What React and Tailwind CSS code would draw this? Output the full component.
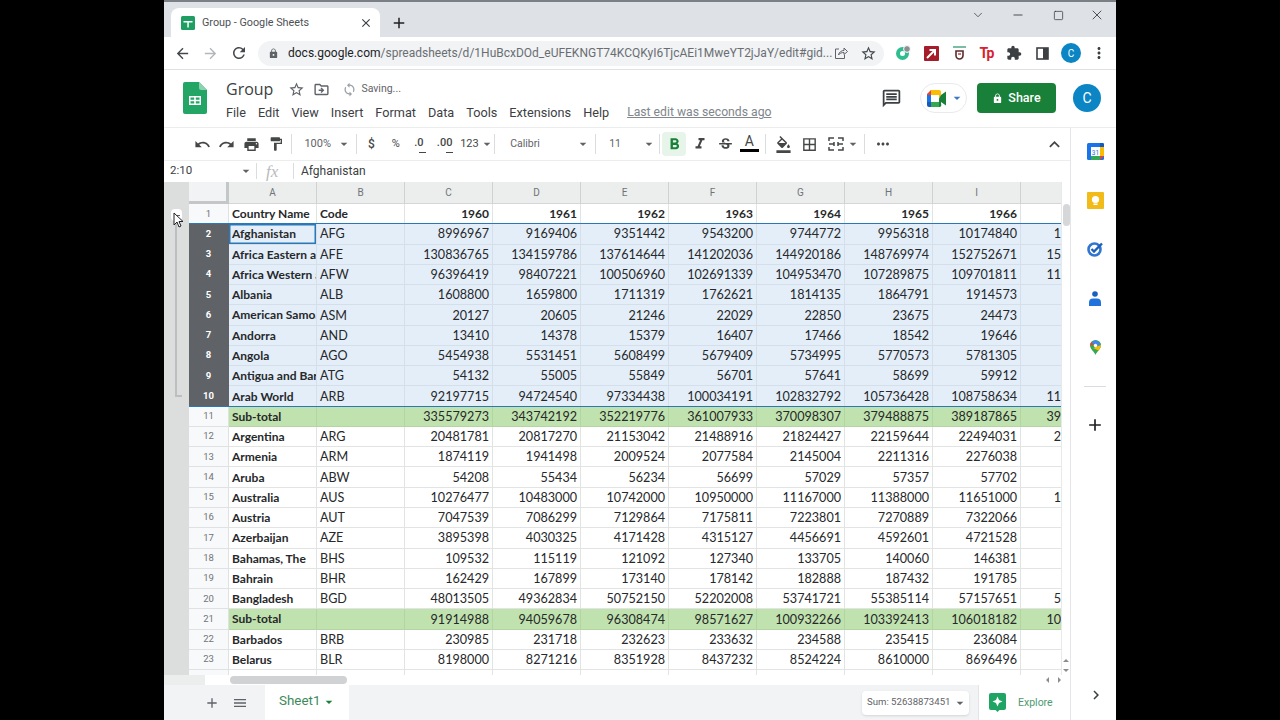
import {
    MdUndo, MdRedo, MdPrint, MdFormatPaint, MdFormatBold, MdFormatItalic, MdStrikethroughS, MdFormatColorFill,
    MdBorderAll, MdMoreHoriz, MdKeyboardArrowUp, MdArrowDropDown, MdStarBorder, MdOutlineDriveFileMove, MdSync,
    MdLock, MdAdd, MdMenu, MdExtension, MdArrowBack, MdArrowForward, MdRefresh, MdMoreVert, MdChevronRight, MdClose,
    MdOutlineInsertComment,
} from 'react-icons/md';
import { ChevronDown, Minus, Square, X } from 'lucide-react';

const rows = [
    ['Country Name', 'Code', '1960', '1961', '1962', '1963', '1964', '1965', '1966', ''],
    ['Afghanistan', 'AFG', '8996967', '9169406', '9351442', '9543200', '9744772', '9956318', '10174840', '1'],
    ['Africa Eastern and Southern', 'AFE', '130836765', '134159786', '137614644', '141202036', '144920186', '148769974', '152752671', '15'],
    ['Africa Western and Central', 'AFW', '96396419', '98407221', '100506960', '102691339', '104953470', '107289875', '109701811', '11'],
    ['Albania', 'ALB', '1608800', '1659800', '1711319', '1762621', '1814135', '1864791', '1914573', ''],
    ['American Samoa', 'ASM', '20127', '20605', '21246', '22029', '22850', '23675', '24473', ''],
    ['Andorra', 'AND', '13410', '14378', '15379', '16407', '17466', '18542', '19646', ''],
    ['Angola', 'AGO', '5454938', '5531451', '5608499', '5679409', '5734995', '5770573', '5781305', ''],
    ['Antigua and Barbuda', 'ATG', '54132', '55005', '55849', '56701', '57641', '58699', '59912', ''],
    ['Arab World', 'ARB', '92197715', '94724540', '97334438', '100034191', '102832792', '105736428', '108758634', '11'],
    ['Sub-total', '', '335579273', '343742192', '352219776', '361007933', '370098307', '379488875', '389187865', '39'],
    ['Argentina', 'ARG', '20481781', '20817270', '21153042', '21488916', '21824427', '22159644', '22494031', '2'],
    ['Armenia', 'ARM', '1874119', '1941498', '2009524', '2077584', '2145004', '2211316', '2276038', ''],
    ['Aruba', 'ABW', '54208', '55434', '56234', '56699', '57029', '57357', '57702', ''],
    ['Australia', 'AUS', '10276477', '10483000', '10742000', '10950000', '11167000', '11388000', '11651000', '1'],
    ['Austria', 'AUT', '7047539', '7086299', '7129864', '7175811', '7223801', '7270889', '7322066', ''],
    ['Azerbaijan', 'AZE', '3895398', '4030325', '4171428', '4315127', '4456691', '4592601', '4721528', ''],
    ['Bahamas, The', 'BHS', '109532', '115119', '121092', '127340', '133705', '140060', '146381', ''],
    ['Bahrain', 'BHR', '162429', '167899', '173140', '178142', '182888', '187432', '191785', ''],
    ['Bangladesh', 'BGD', '48013505', '49362834', '50752150', '52202008', '53741721', '55385114', '57157651', '5'],
    ['Sub-total', '', '91914988', '94059678', '96308474', '98571627', '100932266', '103392413', '106018182', '10'],
    ['Barbados', 'BRB', '230985', '231718', '232623', '233632', '234588', '235415', '236084', ''],
    ['Belarus', 'BLR', '8198000', '8271216', '8351928', '8437232', '8524224', '8610000', '8696496', ''],
    ['', '', '', '', '', '', '', '', '', ''],
];

const menus = ['File', 'Edit', 'View', 'Insert', 'Format', 'Data', 'Tools', 'Extensions', 'Help'];
const columns = ['A', 'B', 'C', 'D', 'E', 'F', 'G', 'H', 'I', ''];

const Sep = ({ className = '' }) => <div className={`w-px h-[20px] bg-[#dadce0] shrink-0 ${className}`} />;

const ToolBtn = ({ children, className = '' }) => (
    <div className={`w-[24.6px] h-[24px] shrink-0 flex items-center justify-center text-[#444746] ${className}`}>{children}</div>
);

const Caret = ({ className = '' }) => <MdArrowDropDown size={16} className={`text-[#5f6368] shrink-0 ${className}`} />;

const SheetsLogo = () => (
    <svg width="24" height="32" viewBox="0 0 24 32">
        <path d="M2 0h14l8 8v22a2 2 0 0 1-2 2H2a2 2 0 0 1-2-2V2a2 2 0 0 1 2-2z" fill="#23a566" />
        <path d="M16 0l8 8h-6a2 2 0 0 1-2-2z" fill="#8ed1b1" />
        <path d="M6 14h12v9H6z M7.5 15.5v2.2h3.7v-2.2z M12.8 15.5v2.2h3.7v-2.2z M7.5 19.3v2.2h3.7v-2.2z M12.8 19.3v2.2h3.7v-2.2z" fill="#fff" fillRule="evenodd" />
    </svg>
);

const Favicon = () => (
    <svg width="14" height="14" viewBox="0 0 14 14">
        <rect width="14" height="14" rx="1.5" fill="#1e9e63" />
        <path d="M2.500 5h9v1.500H7.800V11.500H6.300V6.500H2.500z" fill="#fff" />
    </svg>
);

const ExtIcons = () => (
    <div className="flex items-center">
        <div className="w-[28px] flex justify-center">
            <svg width="16" height="16" viewBox="0 0 16 16">
                <circle cx="7.500" cy="8.500" r="6.500" fill="#2ebd8e" />
                <circle cx="7.500" cy="8.500" r="2.500" fill="#fff" />
                <circle cx="12" cy="4" r="3.400" fill="#8b8f94" stroke="#fff" />
            </svg>
        </div>
        <div className="w-[28px] flex justify-center">
            <svg width="15" height="15" viewBox="0 0 15 15">
                <rect width="15" height="15" rx="1" fill="#a51d2a" />
                <path d="M3 12l7-7M5.500 4H11v5.500" stroke="#fff" strokeWidth="2" fill="none" />
            </svg>
        </div>
        <div className="w-[28px] flex justify-center">
            <svg width="15" height="15" viewBox="0 0 15 15">
                <path d="M1 1h13" stroke="#3fa37c" strokeWidth="1.400" />
                <path d="M4 5h7v4.500a3.500 3.500 0 0 1-7 0z" fill="none" stroke="#5b2a2a" strokeWidth="1.600" />
                <path d="M6 8h3" stroke="#c33" strokeWidth="1.400" />
            </svg>
        </div>
        <div className="w-[27px] flex justify-center text-[14px] font-bold text-[#d9202c] font-[Roboto] tracking-[-1px]">Tp</div>
        <div className="w-[28px] flex justify-center">
            <MdExtension size={16} className="text-[#3c4043]" />
        </div>
        <div className="w-[28px] flex justify-center">
            <svg width="13" height="13" viewBox="0 0 13 13">
                <rect x="1" y="1" width="11" height="11" fill="#fff" stroke="#3c4043" strokeWidth="1.600" />
                <rect x="7" y="1" width="5" height="11" fill="#3c4043" />
            </svg>
        </div>
        <div className="w-[30px] flex justify-center">
            <div className="w-[20px] h-[20px] rounded-full bg-[#0b85c3] text-white text-[10px] flex items-center justify-center">C</div>
        </div>
        <div className="w-[26px] flex justify-center">
            <MdMoreVert size={18} className="text-[#3c4043]" />
        </div>
    </div>
);

const MeetIcon = () => (
    <svg width="21" height="17" viewBox="0 0 21 17">
        <path d="M4 0h8v5H4z" fill="#fbbc04" />
        <path d="M0 4l4-4v5H0z" fill="#ea4335" />
        <path d="M0 5h4v7H0z" fill="#1a73e8" />
        <path d="M0 12h4v5H2a2 2 0 0 1-2-2z" fill="#1558c0" />
        <path d="M4 12h8v5H4z" fill="#34a853" />
        <path d="M12 0a2 2 0 0 1 2 2v3l-2 3.500V5V0z" fill="#fbbc04" />
        <path d="M12 8.500l2-3.500 5-3.500v14l-5-3.500v2a2 2 0 0 1-2 3z" fill="#188038" />
        <rect x="4" y="5" width="8" height="7" fill="#fff" />
    </svg>
);

const SideIcons = () => (
    <div className="w-[46px] shrink-0 border-l border-[#e3e5e7] flex flex-col items-center pl-[3px]">
        <div className="mt-[15px] h-[17px]">
            <svg width="17" height="17" viewBox="0 0 17 17">
                <rect width="17" height="17" rx="1.500" fill="#1a73e8" />
                <path d="M13 0h2.500A1.500 1.500 0 0 1 17 1.500V4h-4z" fill="#1558c0" />
                <path d="M13 4h4v9h-4z" fill="#fbbc04" />
                <path d="M4 13h9v4H4z" fill="#34a853" />
                <path d="M13 13h4l-4 4z" fill="#ea4335" />
                <rect x="4" y="4" width="9" height="9" fill="#fff" />
                <text x="8.500" y="11.500" fontSize="6.500" fill="#1a73e8" textAnchor="middle" fontFamily="Roboto">31</text>
            </svg>
        </div>
        <div className="mt-[32px] h-[17px]">
            <svg width="17" height="17" viewBox="0 0 17 17">
                <rect width="17" height="17" rx="1" fill="#f1bc1a" />
                <circle cx="8.500" cy="7.500" r="3.600" fill="#fff" />
                <rect x="6.500" y="11.500" width="4" height="1.500" fill="#fff" />
            </svg>
        </div>
        <div className="mt-[32px] h-[16px]">
            <svg width="16" height="16" viewBox="0 0 16 16">
                <circle cx="7.500" cy="8.500" r="6" fill="none" stroke="#2f76d2" strokeWidth="2.600" />
                <path d="M4.500 8l2.500 2.500L15 2.500" fill="none" stroke="#1e5fb8" strokeWidth="2.400" />
            </svg>
        </div>
        <div className="mt-[34px] h-[15px]">
            <svg width="12" height="15" viewBox="0 0 12 15">
                <circle cx="6" cy="3" r="2.800" fill="#1a5fc0" />
                <path d="M0 15v-3.500A4 4 0 0 1 4 7.500h4a4 4 0 0 1 4 4V15z" fill="#2173dc" />
            </svg>
        </div>
        <div className="mt-[34px] h-[15px]">
            <svg width="11" height="15" viewBox="0 0 11 15">
                <path d="M5.500 15C4.500 12 0 9 0 5.500a5.500 5.500 0 0 1 11 0C11 9 6.500 12 5.500 15z" fill="#34a853" />
                <path d="M1 2.500L5.500 0 11 4 7 6z" fill="#4285f4" />
                <path d="M0 5.500a5.500 5.500 0 0 1 1.500-3.500L4 5z" fill="#ea4335" />
                <path d="M3 8L11 5c0 2-1 3.500-2.500 5.500z" fill="#fbbc04" />
                <circle cx="5.500" cy="5.500" r="1.700" fill="#fff" />
            </svg>
        </div>
        <div className="mt-[31px] w-[22px] h-px bg-[#dadce0]" />
        <MdAdd size={20} className="mt-[28px] text-[#202124]" />
    </div>
);

const SheetRow = ({ row, index }) => {
    const selected = index >= 2 && index <= 10;
    const total = row[0] === 'Sub-total';
    const header = index === 1;
    const bg = selected ? 'bg-[#e3eef9]' : total ? 'bg-[#c0e2ae]' : 'bg-white';
    const line = selected ? 'border-[#d4dfea]' : total ? 'border-[#b4d4a3]' : 'border-[#e2e3e3]';
    return (
        <div className="flex h-[20.27px] shrink-0 text-[12.6px] text-[#26282a] font-[Lato]">
            <div className={`w-[40px] shrink-0 flex items-center justify-center text-[9.5px] font-[Roboto] border-r border-b ${selected ? 'bg-[#5f6368] text-white font-bold border-[#5f6368]' : 'bg-[#f8f9fa] text-[#6f7478] border-[#e0e1e2]'}`}>
                {index}
            </div>
            {row.map((value, i) => (
                <div
                    key={i}
                    className={`shrink-0 flex items-center overflow-hidden whitespace-nowrap border-b ${line} ${bg}
                        ${i === 9 ? 'w-[40px] justify-end' : 'w-[88px] border-r'}
                        ${i === 0 ? 'pl-[3px] font-bold justify-start text-[12px]' : ''}
                        ${i === 1 ? 'pl-[3px] justify-start' : ''}
                        ${i > 1 && i < 9 ? 'pr-[3px] justify-end' : ''}
                        ${header && i > 0 ? 'font-bold text-[12px]' : ''}
                        ${header || i === 0 ? 'pt-[1px]' : 'pt-[2px]'}
                        ${index === 2 && i === 0 ? 'shadow-[inset_0_0_0_1.5px_#2b78b8]' : ''}`}
                >
                    {value}
                </div>
            ))}
        </div>
    );
};

const Grid = () => (
    <div className="flex flex-1 min-h-0">
        {/* outline group gutter */}
        <div className="relative w-[25px] shrink-0 bg-[#dcdddd]">
            <div className="absolute left-[11px] top-[41px] w-[2px] h-[173px] bg-[#bcbebf]" />
            <div className="absolute left-[11px] top-[213px] w-[7px] h-[2px] bg-[#bcbebf]" />
            <div className="absolute left-[7px] top-[27px] w-[11px] h-[12px] rounded-sm bg-white flex items-center justify-center">
                <div className="w-[6px] h-px bg-[#5f6368]" />
            </div>
            <svg className="absolute left-[9px] top-[30px]" width="11" height="16" viewBox="0 0 11 16">
                <path d="M1 1v12l3-3 2 5 2-1-2-4.500h4z" fill="#fff" stroke="#202124" strokeWidth="1" />
            </svg>
        </div>
        <div className="w-[872px] shrink-0 flex flex-col overflow-hidden">
            <div className="flex h-[22px] shrink-0 text-[10px] text-[#6f7478] font-[Roboto]">
                <div className="w-[40px] shrink-0 bg-[#f1f3f4] border-r-[3px] border-b-[3px] border-[#c4c7c8]" />
                {columns.map((col, i) => (
                    <div key={i} className={`shrink-0 bg-[#eceded] border-b border-[#d4d6d7] flex items-center justify-center ${i === 9 ? 'w-[40px]' : 'w-[88px] border-r border-r-[#cfd1d2]'}`}>
                        {col}
                    </div>
                ))}
            </div>
            <div className="flex-1 min-h-0 overflow-hidden flex flex-col">
                {rows.map((row, i) => (
                    <div key={i} className={i === 1 || i === 10 ? 'border-t border-[#2b78b8] -mt-px' : ''}>
                        <SheetRow row={row} index={i + 1} />
                    </div>
                ))}
            </div>
        </div>
        {/* vertical scrollbar */}
        <div className="w-[9px] shrink-0 bg-white border-l border-[#e8e9ea] flex flex-col items-center pt-[22px]">
            <div className="w-[7px] h-[22px] rounded-full bg-[#d5d7d8]" />
            <div className="mt-auto text-[#8a8d90] flex flex-col items-center gap-[7px] pb-[3px]">
                <div className="w-0 h-0 border-x-[3px] border-x-transparent border-b-[3px] border-b-[#8a8d90]" />
                <div className="w-0 h-0 border-x-[3px] border-x-transparent border-t-[3px] border-t-[#8a8d90]" />
            </div>
        </div>
    </div>
);

export default function App() {
    return (
        <div className="w-[1280px] h-[720px] bg-black overflow-hidden pl-[164px] font-[Roboto]">
            <div className="w-[952px] h-full bg-white flex flex-col">
                {/* tab strip */}
                <div className="h-[37px] shrink-0 bg-[#dee1e6] border-t-2 border-[#7b8086] flex items-end pl-[7px]">
                    <div className="w-[209px] h-[29px] bg-white rounded-t-lg flex items-center pl-[10px] pr-[7px]">
                        <Favicon />
                        <span className="ml-[7px] pt-[2px] text-[10.8px] text-[#4d5156] whitespace-nowrap">Group - Google Sheets</span>
                        <MdClose size={14} className="ml-auto text-[#3c4043]" />
                    </div>
                    <MdAdd size={18} className="ml-[10px] mb-[5px] text-[#202124]" />
                    <div className="ml-auto h-full self-start flex items-center text-[#2a2d30] pb-[9px]">
                        <div className="w-[40px] flex justify-center"><ChevronDown size={14} strokeWidth={1.2} /></div>
                        <div className="w-[40px] flex justify-center"><Minus size={14} strokeWidth={1.4} /></div>
                        <div className="w-[40px] flex justify-center"><Square size={11} strokeWidth={1.5} /></div>
                        <div className="w-[38px] flex justify-center"><X size={16} strokeWidth={1.2} /></div>
                    </div>
                </div>
                {/* address bar */}
                <div className="h-[33px] shrink-0 bg-white border-b border-[#dfe1e5] flex items-center pl-[10px]">
                    <MdArrowBack size={17} className="text-[#44484c]" />
                    <MdArrowForward size={17} className="ml-[11px] text-[#b4b7ba]" />
                    <MdRefresh size={18} className="ml-[11px] text-[#44484c]" />
                    <div className="ml-[10px] w-[626px] h-[25px] rounded-full bg-[#f1f3f4] flex items-center pl-[10px] shrink-0">
                        <MdLock size={11} className="text-[#5f6368] shrink-0" />
                        <span className="ml-[9px] text-[12px] whitespace-nowrap text-[#6a6e73]">
                            <span className="text-[#202124]">docs.google.com</span>/spreadsheets/d/1HuBcxDOd_eUFEKNGT74KCQKyI6TjcAEi1MweYT2jJaY/edit#gid...
                        </span>
                        <svg className="ml-auto shrink-0" width="14" height="14" viewBox="0 0 14 14">
                            <path d="M5 3H1.500v9.500h9V9M4.500 9c.5-3 3-4.500 5.500-4.500V2l3.500 3.500L10 8.500V6.500C8 6.500 5.500 7 4.500 9z" fill="none" stroke="#5f6368" strokeWidth="1" />
                        </svg>
                        <MdStarBorder size={17} className="ml-[12px] mr-[7px] text-[#44484c] shrink-0" />
                    </div>
                    <div className="ml-[5px]"><ExtIcons /></div>
                </div>
                {/* docs header */}
                <div className="h-[57px] shrink-0 flex pl-[19px]">
                    <div className="pt-[12px]"><SheetsLogo /></div>
                    <div className="ml-[19px] pt-[8px] min-w-0">
                        <div className="flex items-center h-[22px]">
                            <span className="text-[16px] text-[#3c4043] font-['Open_Sans']">Group</span>
                            <MdStarBorder size={17} className="ml-[15px] text-[#5f6368]" />
                            <MdOutlineDriveFileMove size={17} className="ml-[8px] text-[#5f6368]" />
                            <MdSync size={15} className="ml-[12px] text-[#9aa0a6]" />
                            <span className="ml-[4px] text-[10.5px] text-[#5f6368]">Saving...</span>
                        </div>
                        <div className="flex items-center mt-[3px] text-[12.7px] text-[#3c4043] whitespace-nowrap">
                            {menus.map((m) => (
                                <span key={m} className="mr-[12px]">{m}</span>
                            ))}
                            <span className="ml-[6px] text-[12.2px] text-[#80868b] underline">Last edit was seconds ago</span>
                        </div>
                    </div>
                    <div className="ml-auto flex items-center pr-[15px] pb-[1px]">
                        <MdOutlineInsertComment size={21} className="text-[#3c4043] -scale-x-100" />
                        <div className="ml-[18px] w-[47px] h-[30px] rounded-full border border-[#e8eaed] flex items-center justify-center gap-[1px]">
                            <MeetIcon />
                            <MdArrowDropDown size={16} className="shrink-0 -mr-[4px] text-[#3b78c4]" />
                        </div>
                        <div className="ml-[10px] w-[79px] h-[30px] rounded bg-[#188038] flex items-center justify-center text-white text-[12.5px] font-medium">
                            <MdLock size={11} />
                            <span className="ml-[5px]">Share</span>
                        </div>
                        <div className="ml-[17px] w-[28px] h-[28px] rounded-full bg-[#0b85c3] text-white text-[14px] flex items-center justify-center">C</div>
                    </div>
                </div>
                {/* main column + side panel */}
                <div className="flex-1 min-h-0 flex">
                    <div className="w-[906px] shrink-0 flex flex-col min-h-0">
                        {/* toolbar */}
                        <div className="h-[34px] shrink-0 border-t border-[#eceded] border-b flex items-center pl-[26px] text-[#444746]">
                            <ToolBtn><MdUndo size={17} /></ToolBtn>
                            <ToolBtn><MdRedo size={17} /></ToolBtn>
                            <ToolBtn><MdPrint size={17} /></ToolBtn>
                            <ToolBtn><MdFormatPaint size={16} /></ToolBtn>
                            <Sep className="ml-[3px]" />
                            <span className="ml-[12px] w-[27px] text-[11px] text-[#5f6368]">100%</span>
                            <Caret className="ml-[5px]" />
                            <Sep className="ml-[4px]" />
                            <ToolBtn className="ml-[2px] text-[12px] font-medium !w-[24px]">$</ToolBtn>
                            <ToolBtn className="text-[11px]">%</ToolBtn>
                            <ToolBtn className="text-[11px] font-medium">
                                <span>.0<span className="block h-0 border-t border-[#444746] w-[7px] ml-[5px]" /></span>
                            </ToolBtn>
                            <ToolBtn className="text-[11px] font-medium">
                                <span>.00<span className="block h-0 border-t border-[#444746] w-[7px] ml-[9px]" /></span>
                            </ToolBtn>
                            <span className="w-[20px] ml-[3px] text-[11px]">123</span>
                            <Caret className="-ml-[1px]" />
                            <Sep className="ml-[-1px]" />
                            <span className="ml-[15px] w-[66px] text-[10.5px] text-[#5f6368]">Calibri</span>
                            <Caret className="ml-[-1px]" />
                            <Sep className="ml-[4px]" />
                            <span className="ml-[13px] w-[40px] text-[10.5px] text-[#5f6368]">11</span>
                            <Caret className="ml-[-8px]" />
                            <Sep className="ml-[2px]" />
                            <div className="ml-[2px] w-[24px] h-[24px] rounded-sm bg-[#e6f4ea] flex items-center justify-center text-[#188038]">
                                <MdFormatBold size={19} />
                            </div>
                            <ToolBtn className="ml-[2px]"><MdFormatItalic size={18} /></ToolBtn>
                            <ToolBtn><MdStrikethroughS size={17} /></ToolBtn>
                            <div className="w-[24px] h-[24px] shrink-0 flex flex-col items-center pt-[2px]">
                                <span className="text-[14px] leading-[15px] text-[#444746]">A</span>
                                <div className="w-[19px] h-[3px] bg-black" />
                            </div>
                            <Sep className="ml-[4px]" />
                            <ToolBtn className="ml-[5px]"><MdFormatColorFill size={17} /></ToolBtn>
                            <ToolBtn className="ml-[1px]"><MdBorderAll size={17} /></ToolBtn>
                            <ToolBtn className="ml-[2px]">
                                <svg width="16" height="14" viewBox="0 0 16 14">
                                    <path d="M1 4V1h5M10 1h5v3M1 10v3h5M10 13h5v-3M1 7h5M10 7h5M6 5v4M10 5v4" fill="none" stroke="#444746" strokeWidth="1.500" />
                                </svg>
                            </ToolBtn>
                            <Caret className="ml-[-3px]" />
                            <Sep className="ml-[3px]" />
                            <ToolBtn className="ml-[6px]"><MdMoreHoriz size={18} /></ToolBtn>
                            <MdKeyboardArrowUp size={21} className="ml-auto mr-[5px] text-[#444746]" />
                        </div>
                        {/* formula bar */}
                        <div className="h-[21px] shrink-0 flex items-center text-[11.5px] text-[#3c4043] pb-[1px]">
                            <span className="ml-[6px] w-[68px]">2:10</span>
                            <Caret />
                            <Sep className="ml-[2px] !h-[16px]" />
                            <span className="ml-[9px] w-[27px] font-['Liberation_Serif'] italic text-[17px] leading-none text-[#b8bbbe]">fx</span>
                            <Sep className="!h-[16px]" />
                            <span className="ml-[7px] text-[12px]">Afghanistan</span>
                        </div>
                        <Grid />
                        {/* horizontal scrollbar */}
                        <div className="h-[10px] shrink-0 bg-white flex items-center">
                            <div className="w-[41px] h-full bg-[#eceded]" />
                            <div className="ml-[25px] w-[117px] h-[8px] rounded-full bg-[#d0d2d3]" />
                            <div className="ml-auto mr-[9px] flex items-center gap-[9px]">
                                <div className="w-0 h-0 border-y-[3px] border-y-transparent border-r-[3px] border-r-[#8a8d90]" />
                                <div className="w-0 h-0 border-y-[3px] border-y-transparent border-l-[3px] border-l-[#8a8d90]" />
                            </div>
                        </div>
                        {/* sheet tabs */}
                        <div className="h-[35px] shrink-0 bg-[#f1f3f4] flex items-center pl-[40px]">
                            <MdAdd size={16} className="text-[#5f6368]" />
                            <MdMenu size={16} className="ml-[12px] text-[#5f6368]" />
                            <div className="ml-[17px] w-[84px] h-full bg-white flex items-center pl-[14px] pb-[2px] text-[13.4px] text-[#3c8a5b]">
                                Sheet1
                                <MdArrowDropDown size={16} className="ml-[1px] text-[#188038]" />
                            </div>
                            <div className="ml-auto w-[107px] h-[24px] bg-white rounded-sm shadow-sm flex items-center pl-[5px] text-[9.6px] text-[#5f6368] whitespace-nowrap">
                                Sum: 52638873451
                                <Caret className="ml-[2px]" />
                            </div>
                            <div className="ml-[9px] w-[92px] h-full bg-white border-l border-[#e3e5e7] flex items-center pl-[10px]">
                                <svg width="17" height="19" viewBox="0 0 17 19">
                                    <path d="M2 0h13a2 2 0 0 1 2 2v13a2 2 0 0 1-2 2h-4.500L8.500 19 6.500 17H2a2 2 0 0 1-2-2V2a2 2 0 0 1 2-2z" fill="#1fa463" />
                                    <path d="M8.500 3.500l1.500 3.500 3.500 1.500-3.500 1.500-1.500 3.500-1.500-3.500-3.500-1.500 3.500-1.500z" fill="#fff" />
                                </svg>
                                <span className="ml-[12px] text-[10.5px] text-[#4d9a72]">Explore</span>
                            </div>
                        </div>
                    </div>
                    <div className="flex flex-col min-h-0 border-t border-[#eceded]">
                        <div className="flex-1 min-h-0 flex"><SideIcons /></div>
                        <div className="h-[35px] border-l border-[#e3e5e7] flex items-start justify-center pl-[4px] pt-[1px]">
                            <MdChevronRight size={18} className="text-[#3c4043]" />
                        </div>
                    </div>
                </div>
            </div>
        </div>
    );
}
